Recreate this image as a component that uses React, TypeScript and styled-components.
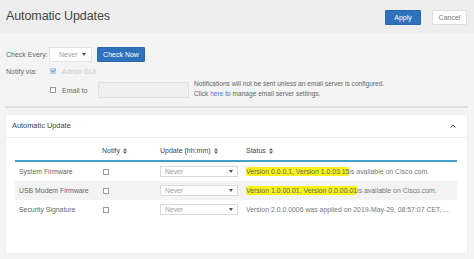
import React from "react";
import styled, { createGlobalStyle } from "styled-components";

const GlobalStyle = createGlobalStyle`
  html, body {
    margin: 0;
    padding: 0;
    background: #f4f4f4;
    font-family: "Liberation Sans", Arial, sans-serif;
    color: #666;
  }
`;

type Row = {
    name: string;
    highlight?: string;
    status: string;
};

const rows: Row[] = [
    {
        name: "System Firmware",
        highlight: "Version 0.0.0.1, Version 1.0.03.15 ",
        status: "is available on Cisco.com.",
    },
    {
        name: "USB Modem Firmware",
        highlight: "Version 1.0.00.01, Version 0.0.00.01 ",
        status: "is available on Cisco.com.",
    },
    {
        name: "Security Signature",
        status: "Version 2.0.0.0006 was applied on 2019-May-29, 08:57:07 CET, ...",
    },
];

const SortIcon = () => (
    <svg width="4" height="6" viewBox="0 0 4 6" style={{ marginLeft: 3 }}>
        <path d="M2 0 L4 2.4 H0 Z M2 6 L4 3.6 H0 Z" fill="#666" />
    </svg>
);

const Caret = () => (
    <svg width="4" height="3" viewBox="0 0 4 3">
        <path d="M0 0 H4 L2 3 Z" fill="#555" />
    </svg>
);

const App: React.FC = () => {
    return (
        <Page>
            <GlobalStyle />
            <Header>
                <Title>Automatic Updates</Title>
                <Actions>
                    <Button primary width={36}>Apply</Button>
                    <Button width={35}>Cancel</Button>
                </Actions>
            </Header>

            <Form>
                <FormRow height={15}>
                    <Label>Check Every:</Label>
                    <Select width={43}>
                        <span>Never</span>
                        <Caret />
                    </Select>
                    <Button primary width={48}>Check Now</Button>
                </FormRow>
                <FormRow height={14} top={2}>
                    <Label>Notify via:</Label>
                    <Box checked />
                    <Muted>Admin GUI</Muted>
                </FormRow>
                <FormRow height={16} top={4}>
                    <Label />
                    <Box />
                    <CheckText>Email to</CheckText>
                    <EmailInput />
                    <Note>
                        Notifications will not be sent unless an email server is configured.
                        <br />
                        Click <Link>here</Link> to manage email server settings.
                    </Note>
                </FormRow>
            </Form>

            <Divider />

            <Card>
                <CardHeader>
                    <span>Automatic Update</span>
                    <svg width="6" height="4" viewBox="0 0 6 4">
                        <path d="M0.5 3.5 L3 1 L5.5 3.5" stroke="#444" strokeWidth="1" fill="none" />
                    </svg>
                </CardHeader>
                <Table>
                    <HeadRow>
                        <HeadCell />
                        <HeadCell>Notify<SortIcon /></HeadCell>
                        <HeadCell>Update (hh:mm)<SortIcon /></HeadCell>
                        <HeadCell>Status<SortIcon /></HeadCell>
                    </HeadRow>
                    {rows.map((row, i) => (
                        <BodyRow key={row.name} striped={i % 2 === 1}>
                            <NameCell>{row.name}</NameCell>
                            <Cell>
                                <Box />
                            </Cell>
                            <Cell>
                                <TableSelect>
                                    <span>Never</span>
                                    <Caret />
                                </TableSelect>
                            </Cell>
                            <Cell>
                                {row.highlight && <Mark>{row.highlight}</Mark>}
                                {row.status}
                            </Cell>
                        </BodyRow>
                    ))}
                </Table>
            </Card>
        </Page>
    );
};

const Page = styled.div`
    width: 474px;
    height: 259px;
    overflow: hidden;
    background: #f4f4f4;
`;

const Header = styled.div`
    height: 33px;
    display: flex;
    align-items: center;
    justify-content: space-between;
    padding: 0 7px 0 6px;
    background: #eeeeee;
`;

const Title = styled.h1`
    margin: 0 0 2px;
    font-size: 12.5px;
    font-weight: normal;
    color: #444;
    letter-spacing: -0.1px;
`;

const Actions = styled.div`
    display: flex;
    gap: 11px;
    margin-top: 1px;
`;

const Button = styled.div<{ primary?: boolean; width: number }>`
    width: ${(p) => p.width}px;
    height: 15px;
    box-sizing: border-box;
    display: flex;
    align-items: center;
    justify-content: center;
    font-size: 7px;
    border-radius: 1px;
    background: ${(p) => (p.primary ? "#2d72ba" : "#ffffff")};
    color: ${(p) => (p.primary ? "#ffffff" : "#777")};
    border: 1px solid ${(p) => (p.primary ? "#2868af" : "#e0e0e0")};
`;

const Form = styled.div`
    padding: 14px 0 0 6px;
`;

const FormRow = styled.div<{ height: number; top?: number }>`
    display: flex;
    align-items: center;
    height: ${(p) => p.height}px;
    margin-top: ${(p) => p.top ?? 0}px;
`;

const Label = styled.div`
    width: 43px;
    font-size: 7px;
    color: #666;
`;

const Select = styled.div<{ width: number }>`
    width: ${(p) => p.width}px;
    height: 15px;
    box-sizing: border-box;
    display: flex;
    align-items: center;
    justify-content: space-between;
    padding: 0 5px 0 9px;
    margin-right: 5px;
    background: #fff;
    border: 1px solid #e4e4e4;
    font-size: 7px;
    color: #a0a0a0;
`;

const Box = styled.div<{ checked?: boolean }>`
    width: 4px;
    height: 4px;
    border: 1px solid ${(p) => (p.checked ? "#b3d0ea" : "#9a9a9a")};
    border-radius: 0.5px;
    background: ${(p) => (p.checked ? "#d8e8f6" : "#fff")};
    margin: 0 6px 0 1px;
    position: relative;
    &::after {
        content: ${(p) => (p.checked ? '""' : "none")};
        position: absolute;
        left: 1px;
        top: -1px;
        width: 1.5px;
        height: 3px;
        border: solid #5a9ad6;
        border-width: 0 1px 1px 0;
        transform: rotate(45deg);
    }
`;

const Muted = styled.span`
    font-size: 7px;
    color: #c8c8c8;
`;

const CheckText = styled.span`
    font-size: 7px;
    color: #666;
    width: 36px;
`;

const EmailInput = styled.div`
    width: 91px;
    height: 16px;
    box-sizing: border-box;
    background: #efefef;
    border: 1px solid #e0e0e0;
    margin-right: 5px;
`;

const Note = styled.div`
    font-size: 6.6px;
    line-height: 10px;
    color: #666;
    margin-top: -3px;
`;

const Link = styled.span`
    color: #3585d4;
`;

const Divider = styled.div`
    height: 2px;
    margin: 8px 6px 0 5px;
    background: #e0e0e0;
`;

const Card = styled.div`
    margin: 6px 6px 0 5px;
    height: 140px;
    background: #fff;
    border: 1px solid #efefef;
    box-sizing: border-box;
`;

const CardHeader = styled.div`
    height: 23px;
    box-sizing: border-box;
    display: flex;
    align-items: center;
    justify-content: space-between;
    padding: 0 11px 1px 6px;
    border-bottom: 1px solid #f0f0f0;
    font-size: 7.4px;
    color: #444;
`;

const Table = styled.div`
    margin: 0 10px 0 9px;
`;

const Grid = styled.div`
    display: grid;
    grid-template-columns: 87px 58px 86px 1fr;
`;

const HeadRow = styled(Grid)`
    height: 24px;
    align-items: end;
    padding-bottom: 6px;
    box-sizing: border-box;
    border-bottom: 2px solid #42a0c9;
`;

const HeadCell = styled.div`
    display: flex;
    align-items: center;
    font-size: 7px;
    color: #444;
`;

const BodyRow = styled(Grid)<{ striped?: boolean }>`
    height: 19px;
    align-items: center;
    background: ${(p) => (p.striped ? "#f3f3f3" : "transparent")};
`;

const Cell = styled.div`
    display: flex;
    align-items: center;
    font-size: 6.9px;
    color: #777;
    white-space: nowrap;
`;

const NameCell = styled(Cell)`
    padding-left: 4px;
    color: #666;
`;

const TableSelect = styled.div`
    width: 78px;
    height: 11px;
    box-sizing: border-box;
    display: flex;
    align-items: center;
    justify-content: space-between;
    padding: 0 4px 0 4px;
    background: #fff;
    border: 1px solid #dadada;
    font-size: 6.8px;
    color: #a0a0a0;
`;

const Mark = styled.span`
    background: #f6f21a;
    color: #666;
    padding: 1px 0;
    border-radius: 2px;
`;

export default App;
